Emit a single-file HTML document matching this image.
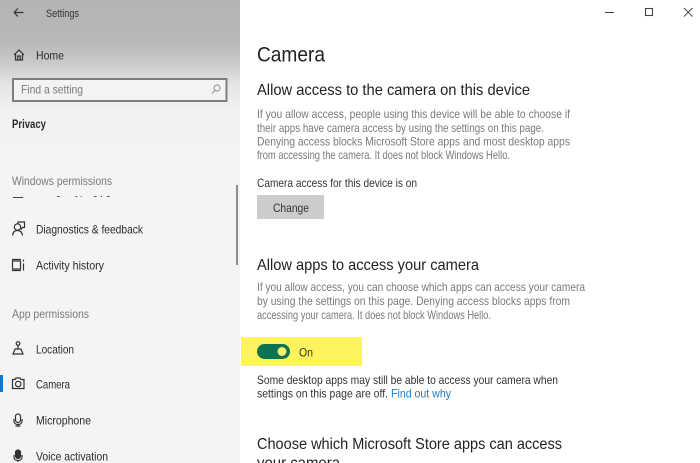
<!DOCTYPE html>
<html><head><meta charset="utf-8"><style>
html,body{margin:0;padding:0;width:700px;height:463px;overflow:hidden;background:#fff}
svg{display:block;position:absolute;left:0;top:0}
text{font-family:"Liberation Sans",sans-serif;fill:#222}
.g{fill:#7a7a7a;font-size:12px}
.n{font-size:12px;fill:#2b2b2b}
.h{font-size:16px;fill:#222}
.s{font-size:12px;fill:#333}
.i{fill:none;stroke:#333;stroke-width:1.2}
</style></head><body>
<svg width="700" height="463" viewBox="0 0 700 463" xmlns="http://www.w3.org/2000/svg">
<defs>
<linearGradient id="sb" x1="0" y1="0" x2="0" y2="1">
<stop offset="0" stop-color="#b4b4b4"/><stop offset=".09" stop-color="#b8b8b8"/><stop offset=".14" stop-color="#cbcbcb"/><stop offset=".18" stop-color="#e4e4e4"/><stop offset=".24" stop-color="#f2f2f2"/><stop offset=".4" stop-color="#f4f4f4"/><stop offset="1" stop-color="#f4f4f4"/>
</linearGradient>
<clipPath id="c"><rect x="0" y="196" width="230" height="6"/></clipPath>
</defs>
<rect width="240" height="463" fill="url(#sb)"/>
<path class="i" d="M14 12.500H23.500M14 12.500L18 8.500M14 12.500L18 16.500"/>
<text x="46" y="17" font-size="11" textLength="33" lengthAdjust="spacingAndGlyphs" style="fill:#333">Settings</text>
<path class="i" d="M14 55L19 50L24 55M15.500 54V60H22.500V54M17.700 60V56H20.300V60"/>
<text x="36" y="59.500" class="n" font-size="12.500" textLength="28" lengthAdjust="spacingAndGlyphs">Home</text>
<rect x="13" y="79" width="213.500" height="22" fill="#f3f3f3" stroke="#7e7e7e" stroke-width="2"/>
<text x="21" y="93.500" class="g" textLength="62" lengthAdjust="spacingAndGlyphs">Find a setting</text>
<circle cx="217" cy="88" r="3" fill="none" stroke="#888" stroke-width=".9"/><path d="M215 90.500L212 93.500" stroke="#888" stroke-width=".9"/>
<text x="12" y="128" class="n" font-weight="bold" textLength="34" lengthAdjust="spacingAndGlyphs">Privacy</text>
<text x="12" y="185" class="g" textLength="100" lengthAdjust="spacingAndGlyphs">Windows permissions</text>
<g clip-path="url(#c)"><rect x="13" y="197" width="10" height="1" fill="#444"/>
<text x="36" y="194.500" class="n" textLength="75" lengthAdjust="spacingAndGlyphs">Inking &amp; typing pg</text></g>
<rect x="236" y="185" width="2" height="80" fill="#8d8d8d"/>
<g class="i"><circle cx="17.500" cy="227" r="3.200"/><path d="M12.500 235.500C13 232 15 230.500 17.500 230.500S22 232 22.500 235.500M18 223.500V222H24.500V227.500H22.500L21 229.500"/></g>
<text x="36" y="233.500" class="n" textLength="107" lengthAdjust="spacingAndGlyphs">Diagnostics &amp; feedback</text>
<g class="i"><rect x="12.500" y="261" width="8" height="8"/><path d="M12 259.500H21M12 270.500H21M23.500 259.500V261.500M23.500 263.500V270.500"/></g>
<text x="36" y="269.500" class="n" textLength="68" lengthAdjust="spacingAndGlyphs">Activity history</text>
<text x="12" y="318" class="g" textLength="77" lengthAdjust="spacingAndGlyphs">App permissions</text>
<g class="i"><circle cx="18" cy="343.500" r="1.800"/><path d="M18 345.500V349M15 349H21L23 354H13L15 349Z"/></g>
<text x="36" y="353.500" class="n" textLength="38" lengthAdjust="spacingAndGlyphs">Location</text>
<rect x="0" y="375" width="3" height="17" fill="#0a78d7"/>
<g class="i"><path d="M12.500 379.500H15L16 378H20L21 379.500H24V388.500H12.500Z"/><circle cx="18.200" cy="384" r="2.700"/></g>
<text x="36" y="388.500" class="n" textLength="34" lengthAdjust="spacingAndGlyphs">Camera</text>
<g class="i"><rect x="15.500" y="414" width="5" height="8.500" rx="2.500"/><path d="M14 419V421C14 423.500 16 424.500 18 424.500S22 423.500 22 421V419M18 424.500V426M15.500 426H20.500"/></g>
<text x="36" y="424.500" class="n" textLength="55" lengthAdjust="spacingAndGlyphs">Microphone</text>
<g class="i"><rect x="15.500" y="450" width="5" height="8.500" rx="2.500" fill="#333"/><path d="M14 455V457C14 459.500 16 460.500 18 460.500S22 459.500 22 457V455M18 460.500V462"/></g>
<text x="36" y="460.500" class="n" textLength="72" lengthAdjust="spacingAndGlyphs">Voice activation</text>

<path d="M605 12.500H614" stroke="#444" stroke-width="1"/>
<rect x="645.500" y="8.500" width="7" height="7" fill="none" stroke="#444" stroke-width="1.100"/>
<path d="M684 8L692.500 16.500M692.500 8L684 16.500" stroke="#444" stroke-width=".9"/>

<text x="257" y="61.500" font-size="21" textLength="68" lengthAdjust="spacingAndGlyphs">Camera</text>
<text x="257" y="95" class="h" textLength="273" lengthAdjust="spacingAndGlyphs">Allow access to the camera on this device</text>
<text x="257" y="118" class="g" textLength="313" lengthAdjust="spacingAndGlyphs">If you allow access, people using this device will be able to choose if</text>
<text x="257" y="132" class="g" textLength="287" lengthAdjust="spacingAndGlyphs">their apps have camera access by using the settings on this page.</text>
<text x="257" y="145.500" class="g" textLength="313" lengthAdjust="spacingAndGlyphs">Denying access blocks Microsoft Store apps and most desktop apps</text>
<text x="257" y="159" class="g" textLength="253" lengthAdjust="spacingAndGlyphs">from accessing the camera. It does not block Windows Hello.</text>
<text x="257" y="187" class="s" textLength="160" lengthAdjust="spacingAndGlyphs">Camera access for this device is on</text>
<rect x="257" y="195" width="67" height="24" fill="#ccc"/>
<text x="273" y="212" class="s" textLength="36" lengthAdjust="spacingAndGlyphs">Change</text>
<text x="257" y="270" class="h" textLength="222" lengthAdjust="spacingAndGlyphs">Allow apps to access your camera</text>
<text x="257" y="291" class="g" textLength="328" lengthAdjust="spacingAndGlyphs">If you allow access, you can choose which apps can access your camera</text>
<text x="257" y="305" class="g" textLength="313" lengthAdjust="spacingAndGlyphs">by using the settings on this page. Denying access blocks apps from</text>
<text x="257" y="319" class="g" textLength="234" lengthAdjust="spacingAndGlyphs">accessing your camera. It does not block Windows Hello.</text>
<rect x="241" y="337" width="121" height="29" fill="#fdf35c"/>
<rect x="257" y="344" width="33" height="15" rx="7.500" fill="#0b7350"/>
<circle cx="282" cy="351.500" r="4.500" fill="#f6f06a"/>
<text x="299" y="356.500" class="s" textLength="14" lengthAdjust="spacingAndGlyphs">On</text>
<text x="257" y="384" class="s" textLength="301" lengthAdjust="spacingAndGlyphs">Some desktop apps may still be able to access your camera when</text>
<text x="257" y="397.500" class="s" textLength="131" lengthAdjust="spacingAndGlyphs">settings on this page are off.</text>
<text x="391" y="397.500" font-size="12" style="fill:#1a7cc9" textLength="60" lengthAdjust="spacingAndGlyphs">Find out why</text>
<text x="257" y="449" class="h" textLength="305" lengthAdjust="spacingAndGlyphs">Choose which Microsoft Store apps can access</text>
<text x="257" y="468" class="h" textLength="83" lengthAdjust="spacingAndGlyphs">your camera</text>
</svg>
</body></html>
